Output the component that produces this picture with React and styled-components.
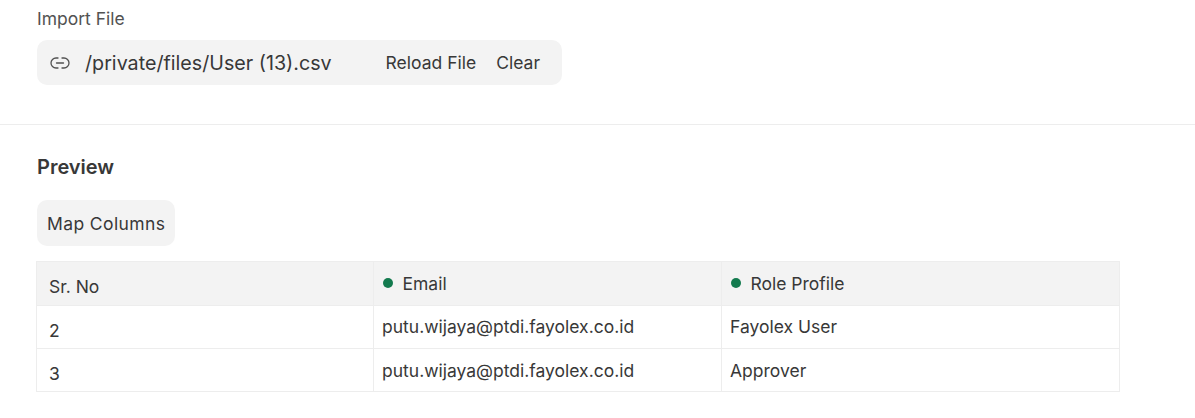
import React from "react";
import styled, { createGlobalStyle } from "styled-components";

const GlobalStyle = createGlobalStyle`
  html, body {
    margin: 0;
    background: #fff;
    font-family: Inter, "Liberation Sans", sans-serif;
    color: #383838;
  }
`;

const Section = styled.div`
  padding: 10px 37px 0;
  height: 125px;
  box-sizing: border-box;
  border-bottom: 1px solid #ededed;
`;

const Label = styled.div`
  font-size: 17.5px;
  line-height: 18px;
  color: #525252;
  margin-bottom: 12px;
`;

const FileBar = styled.div`
  width: 525px;
  height: 45px;
  box-sizing: border-box;
  background: #f3f3f3;
  border-radius: 10px;
  padding: 0 22px 0 13px;
  display: flex;
  align-items: center;
`;

const LinkIcon = styled.svg`
  width: 20px;
  height: 20px;
  margin-right: 15px;
  flex: none;
`;

const FilePath = styled.span`
  font-size: 19.7px;
  flex: 1;
`;

const FileAction = styled.span`
  font-size: 17.5px;
  margin-left: 20px;
`;

const Preview = styled.div`
  padding: 30px 37px 0 36px;
`;

const Title = styled.div`
  font-size: 20px;
  font-weight: 600;
  line-height: 24px;
  margin-left: 1px;
  margin-bottom: 21px;
`;

const MapButton = styled.div`
  display: inline-flex;
  align-items: center;
  height: 46px;
  padding: 0 10px;
  margin-left: 1px;
  background: #f3f3f3;
  border-radius: 10px;
  font-size: 17.5px;
  letter-spacing: 0.4px;
`;

const Table = styled.div`
  width: 1084px;
  margin-top: 15px;
  border: 1px solid #ededed;
  box-sizing: border-box;
`;

const Row = styled.div`
  display: grid;
  grid-template-columns: 336px 348px 1fr;
  height: ${(p) => (p.$head ? "44px" : p.$last ? "42px" : "43px")};
  background: ${(p) => (p.$head ? "#f3f3f3" : "#fff")};
  border-bottom: ${(p) => (p.$last ? "none" : "1px solid #ededed")};
  box-sizing: border-box;
`;

const Cell = styled.div`
  display: flex;
  align-items: center;
  padding: 0 8px ${(p) => p.$lift ?? 2}px 8px;
  font-size: 17.5px;
  border-left: 1px solid #ededed;
`;

const IndexCell = styled(Cell)`
  padding: 6px 8px 0 12px;
  border-left: none;
`;

const Dot = styled.span`
  width: 10px;
  height: 10px;
  border-radius: 50%;
  background: #137a4e;
  margin: 0 9.5px 0 1px;
`;

const rows = [
  ["2", "putu.wijaya@ptdi.fayolex.co.id", "Fayolex User"],
  ["3", "putu.wijaya@ptdi.fayolex.co.id", "Approver"],
];

export default function App() {
  return (
    <>
      <GlobalStyle />
      <Section>
        <Label>Import File</Label>
        <FileBar>
          <LinkIcon viewBox="0 0 20 20" fill="none" stroke="#525252" strokeWidth="1.3" strokeLinecap="round">
            <path d="M8 5H6a5 5 0 0 0 0 10h2" />
            <path d="M12 5h2a5 5 0 0 1 0 10h-2" />
            <path d="M6.5 10h7" />
          </LinkIcon>
          <FilePath>/private/files/User (13).csv</FilePath>
          <FileAction>Reload File</FileAction>
          <FileAction>Clear</FileAction>
        </FileBar>
      </Section>
      <Preview>
        <Title>Preview</Title>
        <MapButton>Map Columns</MapButton>
        <Table>
          <Row $head>
            <IndexCell>Sr. No</IndexCell>
            <Cell $lift={1}><Dot />Email</Cell>
            <Cell $lift={1}><Dot />Role Profile</Cell>
          </Row>
          {rows.map((r, i) => {
            const last = i === rows.length - 1;
            return (
              <Row key={r[0]} $last={last}>
                <IndexCell>{r[0]}</IndexCell>
                <Cell $lift={last ? 0 : 2}>{r[1]}</Cell>
                <Cell $lift={last ? 0 : 2}>{r[2]}</Cell>
              </Row>
            );
          })}
        </Table>
      </Preview>
    </>
  );
}
